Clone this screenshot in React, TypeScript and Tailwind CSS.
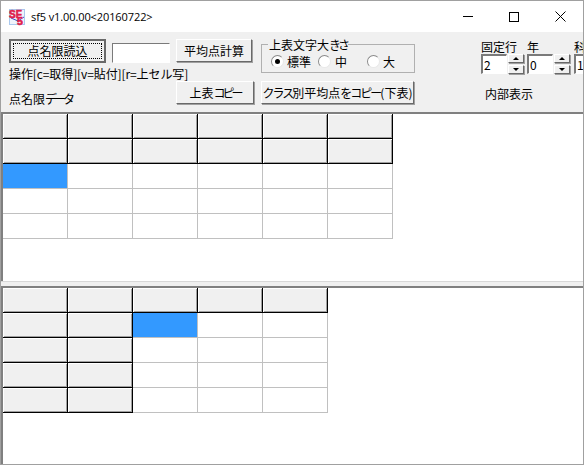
import React from "react"

const jp = "font-['Noto_Sans_CJK_JP','Liberation_Sans',sans-serif]"

function WinButton({ className, children }: { className: string; children: React.ReactNode }) {
  return (
    <div
      className={`flex items-center justify-center whitespace-nowrap border border-t-white border-l-white border-r-[#696969] border-b-[#696969] bg-[#f0f0f0] text-[12px] leading-none text-black shadow-[1px_1px_0_#a0a0a0] ${className}`}
    >
      {children}
    </div>
  )
}

function Radio({ checked, className }: { checked?: boolean; className?: string }) {
  return (
    <span
      className={`flex h-[13px] w-[13px] shrink-0 items-center justify-center rounded-full border border-t-[#8a8a8a] border-l-[#8a8a8a] border-r-[#e8e8e8] border-b-[#e8e8e8] bg-white ${className ?? ""}`}
    >
      {checked && <span className="h-[5px] w-[5px] rounded-full bg-black" />}
    </span>
  )
}

function Spin({ value, width }: { value: string; width: string }) {
  return (
    <div
      className={`flex h-[20px] items-center border-t-2 border-l-2 border-r border-b border-t-[#7a7a7a] border-l-[#7a7a7a] border-r-white border-b-white bg-white pl-[1px] text-[12px] leading-none text-black ${width}`}
    >
      {value}
    </div>
  )
}

function SpinButtons() {
  return (
    <div className="flex h-[20px] w-[16px] flex-col gap-[1px]">
      <div className="flex h-[9px] items-center justify-center border border-t-white border-l-white border-r-[#696969] border-b-[#696969] bg-[#f0f0f0] shadow-[1px_1px_0_#a0a0a0]">
        <span className="h-0 w-0 border-x-[3px] border-b-[3px] border-x-transparent border-b-black" />
      </div>
      <div className="mt-[1px] flex h-[9px] items-center justify-center border border-t-white border-l-white border-r-[#696969] border-b-[#696969] bg-[#f0f0f0] shadow-[1px_1px_0_#a0a0a0]">
        <span className="h-0 w-0 border-x-[3px] border-t-[3px] border-x-transparent border-t-black" />
      </div>
    </div>
  )
}

// kind: f = fixed gray cell, s = selected, n = normal
function Cell({ kind }: { kind: string }) {
  if (kind === "f") {
    return (
      <div className="h-[25px] w-[65px] border-r border-b border-r-black border-b-black bg-[#f0f0f0] shadow-[inset_1px_1px_0_#fff,inset_-1px_-1px_0_#a0a0a0]" />
    )
  }
  if (kind === "s") {
    return <div className="h-[25px] w-[65px] border-r border-b border-r-[#c0c0c0] border-b-[#c0c0c0] bg-[#3399ff]" />
  }
  return <div className="h-[25px] w-[65px] border-r border-b border-r-[#c0c0c0] border-b-[#c0c0c0] bg-white" />
}

function Grid({ rows }: { rows: string[] }) {
  return (
    <div className="flex flex-col">
      {rows.map((r, i) => (
        <div key={i} className="flex">
          {r.split("").map((k, j) => (
            <Cell key={j} kind={k} />
          ))}
        </div>
      ))}
    </div>
  )
}

export default function App() {
  return (
    <div className={`flex h-[465px] w-[584px] flex-col overflow-hidden border border-[#a0a0a0] bg-white ${jp}`}>
      {/* title bar */}
      <div className="flex h-[31px] shrink-0 items-center bg-white pl-[8px]">
        <svg width="16" height="16" viewBox="0 0 16 16" className="shrink-0 overflow-visible">
          <rect x="0" y="0" width="16" height="16" fill="#a9c8ee" />
          <rect x="1" y="1" width="14" height="14" fill="#eef3fb" />
          <path d="M2 9l7 3 6-4" stroke="#3a4fc8" strokeWidth="1" fill="none" />
          <text x="0" y="8.5" fontSize="10" fontWeight="700" fill="#e0204a" stroke="#e0204a" strokeWidth="0.6" fontFamily="Liberation Sans">SF</text>
          <text x="8" y="16" fontSize="10.5" fontWeight="700" fill="#e0204a" stroke="#e0204a" strokeWidth="0.6" fontFamily="Liberation Sans">5</text>
        </svg>
        <span className="ml-[6px] text-[11px] leading-none tracking-[-0.1px] text-black font-['Open_Sans','Liberation_Sans',sans-serif]">
          sf5 v1.00.00&lt;20160722&gt;
        </span>
        <div className="ml-auto flex h-full items-center">
          <div className="flex h-full w-[46px] items-center justify-center">
            <span className="h-[1px] w-[10px] bg-black" />
          </div>
          <div className="flex h-full w-[46px] items-center justify-center">
            <span className="h-[10px] w-[10px] border border-black" />
          </div>
          <div className="flex h-full w-[46px] items-center justify-center">
            <svg width="11" height="11" viewBox="0 0 11 11">
              <path d="M0.5 0.5l10 10M10.5 0.5l-10 10" stroke="#000" strokeWidth="1" fill="none" />
            </svg>
          </div>
        </div>
      </div>

      {/* toolbar */}
      <div className="flex h-[80px] shrink-0 overflow-hidden bg-[#f0f0f0] pl-[8px] pt-[7px] text-black">
        <div className="flex w-[161px] shrink-0 flex-col">
          <div className="flex items-end gap-[6px]">
            <div className="h-[24px] w-[97px] border-2 border-[#696969] bg-[#f0f0f0] p-[2px]">
              <div className="flex h-full items-center justify-center border border-dotted border-black text-[12px] leading-none">
                点名限読込
              </div>
            </div>
            <div className="h-[20px] w-[58px] border border-t-[#7a7a7a] border-l-[#7a7a7a] border-r-white border-b-white bg-white" />
          </div>
          <div className="mt-[3px] whitespace-nowrap text-[12px] leading-[15px] tracking-[-0.1px]">操作[c=取得][v=貼付][r=上セル写]</div>
          <div className="mt-[10px] whitespace-nowrap text-[12px] leading-[15px]">
            点名限<span className="tracking-[-3px]">データ</span>
          </div>
        </div>
        <div className="ml-[6px] flex w-[80px] shrink-0 flex-col justify-between pb-[8px]">
          <WinButton className="h-[23px] w-[76px]">平均点計算</WinButton>
          <WinButton className="h-[23px] w-[78px]">
            上表<span className="tracking-[-3px]">コピー</span>
          </WinButton>
        </div>
        <div className="ml-[5px] flex w-[154px] shrink-0 flex-col justify-between pb-[8px]">
          <div className="relative mt-[5px] h-[29px] border border-[#b0b0b0]">
            <span className="absolute -top-[8px] left-[6px] whitespace-nowrap bg-[#f0f0f0] px-[1px] text-[12px] leading-[15px]">
              上表文字大<span className="tracking-[-3px]">きさ</span>
            </span>
            <div className="flex h-full items-center pl-[9px] pt-[6px] text-[12px] leading-none">
              <Radio checked />
              <span className="ml-[3px]">標準</span>
              <Radio className="ml-[7px]" />
              <span className="ml-[4px]">中</span>
              <Radio className="ml-[20px]" />
              <span className="ml-[3px]">大</span>
            </div>
          </div>
          <WinButton className="h-[23px] w-[153px]">
            <span className="tracking-[-2px]">クラス</span>別平均点<span className="tracking-[-2px]">をコピー</span>(下表)
          </WinButton>
        </div>
        <div className="ml-[66px] flex flex-col">
          <div className="flex text-[12px] leading-[15px]">
            <span className="w-[46px] whitespace-nowrap">固定行</span>
            <span className="w-[47px] whitespace-nowrap">年</span>
            <span className="whitespace-nowrap">科</span>
          </div>
          <div className="flex">
            <div className="flex w-[46px] shrink-0 gap-[1px]">
              <Spin value="2" width="w-[26px]" />
              <SpinButtons />
            </div>
            <div className="flex w-[47px] shrink-0 gap-[1px]">
              <Spin value="0" width="w-[26px]" />
              <SpinButtons />
            </div>
            <Spin value="1" width="w-[26px]" />
          </div>
          <div className="ml-[4px] mt-[12px] text-[12px] leading-[15px]">内部表示</div>
        </div>
      </div>

      {/* upper grid */}
      <div className="h-[169px] shrink-0 border-t-2 border-l-2 border-t-[#808080] border-l-[#808080] bg-white">
        <Grid rows={["ffffff", "ffffff", "snnnnn", "nnnnnn", "nnnnnn"]} />
      </div>

      {/* splitter */}
      <div className="h-[5px] shrink-0 border-t border-[#d8d8d8] bg-[#f0f0f0]" />

      {/* lower grid */}
      <div className="min-h-0 flex-1 border-t-2 border-l-2 border-t-[#808080] border-l-[#808080] bg-white">
        <Grid rows={["fffff", "ffsnn", "ffnnn", "ffnnn", "ffnnn"]} />
      </div>
    </div>
  )
}
